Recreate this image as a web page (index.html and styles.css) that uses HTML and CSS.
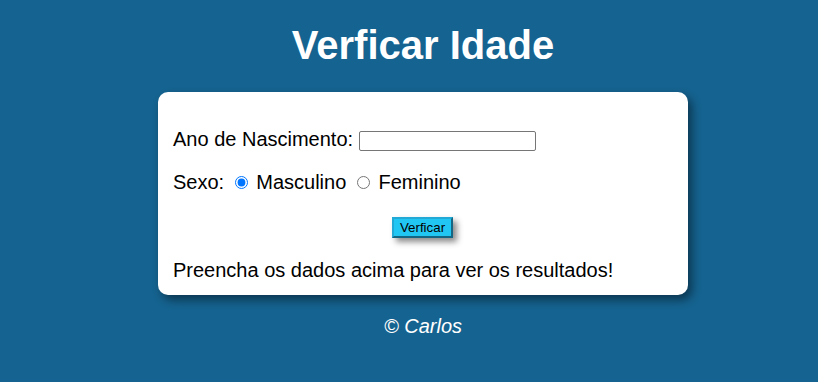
FILE: index.html
```html
<!DOCTYPE html>
<html lang="pt">
<head>
<meta charset="utf-8">
<title>Verificar Idade</title>
<link rel="stylesheet" href="styles.css">
</head>
<body>
<div class="page">
  <header class="title">Verficar Idade</header>
  <section class="card">
    <div class="row row-first">Ano de Nascimento: <input type="text" class="year"></div>
    <div class="row">Sexo: <input type="radio" name="sexo" id="m" checked> <label for="m">Masculino</label> <input type="radio" name="sexo" id="f"> <label for="f">Feminino</label></div>
    <div class="row-btn"><button class="btn">Verficar</button></div>
    <div class="row result">Preencha os dados acima para ver os resultados!</div>
  </section>
  <footer class="footer">© Carlos</footer>
</div>
</body>
</html>
```

FILE: styles.css
```css
html, body {
  margin: 0;
  padding: 0;
}
body {
  background: #156390;
  font-family: "Liberation Sans", Arial, sans-serif;
  height: 382px;
  overflow: hidden;
}
.page {
  width: 530px;
  margin-left: 158px;
  display: flex;
  flex-direction: column;
}
.title {
  margin-top: 22px;
  font-size: 40px;
  line-height: 46px;
  font-weight: bold;
  color: #ffffff;
  text-align: center;
}
.card {
  margin-top: 24px;
  background: #ffffff;
  border-radius: 10px;
  box-shadow: 4px 5px 10px rgba(0, 0, 0, 0.45);
  padding: 36px 15px 13px;
  color: #000000;
  font-size: 20px;
}
.row {
  line-height: 23px;
  height: 23px;
  white-space: nowrap;
}
.row-first {
  margin-bottom: 20px;
}
.year {
  box-sizing: border-box;
  width: 177px;
  height: 20px;
  border: 1px solid #767676;
  border-radius: 2px;
  padding: 1px 2px;
  vertical-align: middle;
  margin: 0;
  font-size: 13px;
}
input[type="radio"] {
  width: 13px;
  height: 13px;
  margin: 3px 3px 0 5px;
  vertical-align: baseline;
}
.row-btn {
  margin-top: 23px;
  margin-bottom: 21px;
  height: 21px;
  display: flex;
  justify-content: center;
}
.btn {
  font-family: "Liberation Sans", Arial, sans-serif;
  font-size: 13.33px;
  line-height: 15px;
  height: 21px;
  padding: 1px 6px;
  margin-left: -1px;
  background: #22c6f2;
  color: #000000;
  border: 2px outset #22a9d6;
  box-shadow: 4px 4px 6px rgba(0, 0, 0, 0.45);
  box-sizing: border-box;
}
.footer {
  margin-top: 20px;
  font-size: 20px;
  line-height: 23px;
  font-style: italic;
  color: #ffffff;
  text-align: center;
}
```
